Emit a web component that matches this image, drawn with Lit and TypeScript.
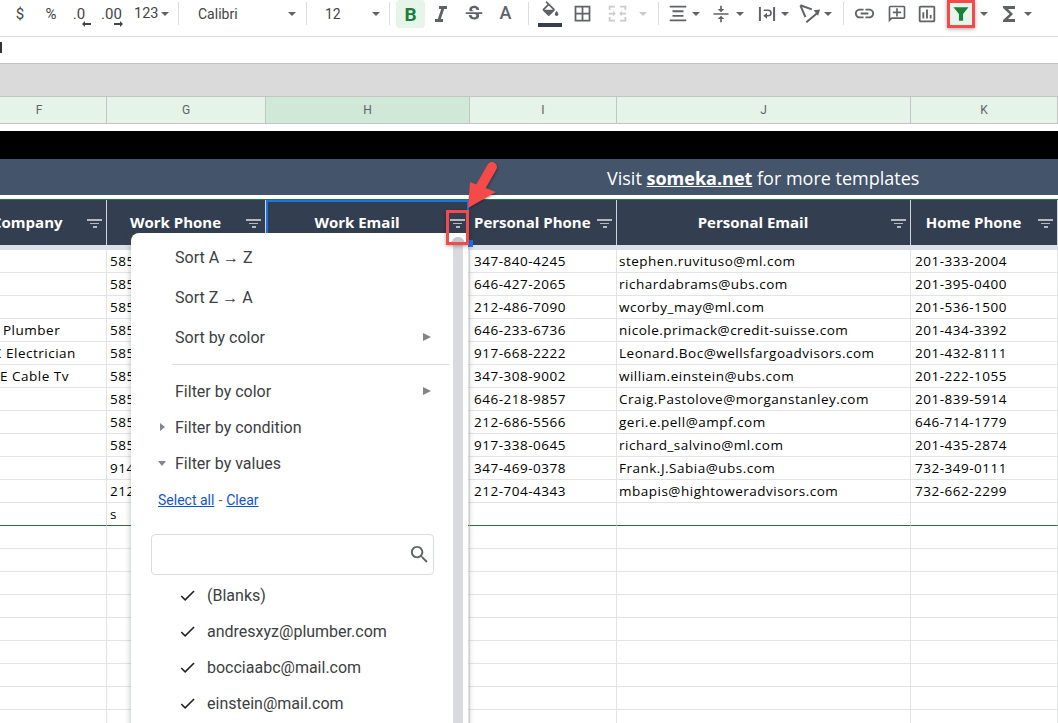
import { LitElement, html, css, svg } from "lit";
import { customElement } from "lit/decorators.js";

const icon = (d: any, size = 20, cls = "") =>
  html`<svg class=${cls} width=${size} height=${size} viewBox="0 0 24 24" fill="currentColor">${d}</svg>`;
const caret = html`<i class="caret"></i>`;
const sep = html`<i class="sep"></i>`;

const P = {
  italic: svg`<path d="M10 4v3h2.210l-3.420 10H6v3h8v-3h-2.210l3.420-10H18V4z"/>`,
  strike: svg`<path d="M6.850 7.080C6.850 4.370 9.450 3 12.240 3c1.640 0 3 .49 3.900 1.280.77.65 1.460 1.730 1.460 3.240h-3.010c0-.31-.05-.59-.15-.85-.29-.86-1.200-1.280-2.250-1.280-1.860 0-2.340 1.020-2.340 1.700 0 .48.25.88.74 1.210.38.25.77.48 1.410.7H7.390c-.21-.34-.54-.89-.54-1.920zM21 12v-2H3v2h9.620c1.150.45 1.960.75 1.960 1.970 0 1-.81 1.670-2.280 1.670-1.540 0-2.930-.54-2.930-2.510H6.400c0 .55.08 1.130.24 1.580.81 2.290 3.290 3.300 5.670 3.300 2.270 0 5.300-.89 5.300-4.050 0-.3-.01-1.160-.48-1.940H21z"/>`,
  fill: svg`<path d="M16.560 8.940L7.620 0 6.210 1.410l2.380 2.380-5.150 5.150c-.59.59-.59 1.540 0 2.120l5.500 5.500c.29.29.68.44 1.060.44s.77-.15 1.060-.44l5.500-5.500c.59-.58.59-1.530 0-2.120zM5.210 10L10 5.210 14.790 10H5.210zM19 11.500s-2 2.170-2 3.500c0 1.100.9 2 2 2s2-.9 2-2c0-1.330-2-3.500-2-3.500z"/>`,
  borders: svg`<path d="M3 3v18h18V3H3zm8 16H5v-6h6v6zm0-8H5V5h6v6zm8 8h-6v-6h6v6zm0-8h-6V5h6v6z"/>`,
  merge: svg`<path d="M2 3h7v2H4v3H2zM15 3h7v5h-2V5h-5zM2 16h2v3h5v2H2zM20 16h2v5h-7v-2h5zM2 11h5V9l3 3-3 3v-2H2zM22 11h-5V9l-3 3 3 3v-2h5z"/>`,
  align: svg`<path d="M3 3h18v2H3zM6 8h12v2H6zM6 13h12v2H6zM3 18h18v2H3z"/>`,
  valign: svg`<path d="M3 11h18v2H3zM11 2h2v4h3l-4 4-4-4h3zM12 14l4 4h-3v4h-2v-4H8z"/>`,
  wrap: svg`<path d="M3.500 3.500v17M20.500 3.500v17" stroke="currentColor" stroke-width="2.400" fill="none"/><path d="M8 7.500h5.500a3.300 3.300 0 0 1 0 6.600H11" stroke="currentColor" stroke-width="2" fill="none"/><path d="M12 10.500l-4.500 3.600 4.500 3.600z"/>`,
  rotate: svg`<path d="M1.500 2.500l12.500 4.500M1.500 2.500l5.500 13" stroke="currentColor" stroke-width="2.200" fill="none"/><path d="M8 21L20 11" stroke="currentColor" stroke-width="2.200" fill="none"/><path d="M23 7l-7 .8 4.800 6z"/>`,
  link: svg`<path d="M3.900 12c0-1.710 1.390-3.100 3.100-3.100h4V7H7c-2.760 0-5 2.240-5 5s2.240 5 5 5h4v-1.900H7c-1.710 0-3.100-1.390-3.100-3.100zM8 13h8v-2H8v2zm9-6h-4v1.900h4c1.710 0 3.100 1.390 3.100 3.100s-1.390 3.100-3.100 3.100h-4V17h4c2.760 0 5-2.240 5-5s-2.240-5-5-5z"/>`,
  comment: svg`<path d="M20 2H4c-1.100 0-2 .9-2 2v18l4-4h14c1.100 0 2-.9 2-2V4c0-1.100-.9-2-2-2zm0 14H5.170L4 17.170V4h16v12zM11 5h2v4h4v2h-4v4h-2v-4H7V9h4z"/>`,
  chart: svg`<path d="M9 17H7v-7h2v7zm4 0h-2V7h2v10zm4 0h-2v-4h2v4zm2 2H5V5h14v14zm0-16H5c-1.100 0-2 .9-2 2v14c0 1.100.9 2 2 2h14c1.100 0 2-.9 2-2V5c0-1.100-.9-2-2-2z"/>`,
  funnel: svg`<path d="M3 4h18l-6.500 8v8h-5v-8z"/>`,
  sigma: svg`<path d="M18 4H6v2l6.500 6L6 18v2h12v-3h-7l5-5-5-5h7z"/>`,
  search: svg`<path d="M15.500 14h-.79l-.28-.27C15.410 12.590 16 11.110 16 9.500 16 5.910 13.090 3 9.500 3S3 5.910 3 9.500 5.910 16 9.500 16c1.610 0 3.090-.59 4.230-1.570l.27.28v.79l5 4.990L20.490 19l-4.990-5zm-6 0C7.010 14 5 11.990 5 9.500S7.010 5 9.500 5 14 7.010 14 9.500 11.990 14 9.500 14z"/>`,
  check: svg`<path d="M9 16.170L4.830 12l-1.420 1.410L9 19 21 7l-1.410-1.410z"/>`,
};

// toolbar runs left to right, w = slot width, ml = gap before it
const tools: { w: number; ml?: number; cls?: string; c: any }[] = [
  { w: 30, c: html`<span class="sym">$</span>` },
  { w: 32, c: html`<span class="sym">%</span>` },
  { w: 24, c: html`<span class="dec">.0<i class="back"></i></span>` },
  { w: 41, c: html`<span class="dec">.00<i class="fwd"></i></span>` },
  { w: 38, cls: "num", c: html`<span>123</span>${caret}` },
  { w: 17, c: sep },
  { w: 111, cls: "drop", c: html`<span>Calibri</span>${caret}` },
  { w: 17, c: sep },
  { w: 67, cls: "drop size", c: html`<span>12</span>${caret}` },
  { w: 14, c: sep },
  { w: 29, cls: "bold", c: html`<b>B</b>` },
  { w: 32, c: icon(P.italic, 24) },
  { w: 33, c: icon(P.strike, 22) },
  { w: 31, cls: "color-a", c: html`<span>A</span>` },
  { w: 14, c: sep },
  { w: 30, cls: "fill", c: html`${icon(P.fill, 21)}<i class="swatch"></i>` },
  { w: 35, c: icon(P.borders, 21) },
  { w: 35, cls: "off", c: icon(P.merge, 21) },
  { w: 16, cls: "off", c: caret },
  { w: 15, c: sep },
  { w: 24, c: icon(P.align, 22) },
  { w: 12, c: caret },
  { w: 24, ml: 7, c: icon(P.valign, 20) },
  { w: 13, c: caret },
  { w: 24, ml: 9, c: icon(P.wrap, 20) },
  { w: 12, c: caret },
  { w: 24, ml: 7, c: icon(P.rotate, 22) },
  { w: 12, c: caret },
  { w: 18, c: sep },
  { w: 24, c: icon(P.link, 23) },
  { w: 25, ml: 8, c: icon(P.comment) },
  { w: 24, ml: 6, c: icon(P.chart, 22) },
  { w: 28, ml: 8, cls: "funnel", c: icon(P.funnel, 20) },
  { w: 12, ml: 3, c: caret },
  { w: 24, ml: 7, c: icon(P.sigma, 24) },
  { w: 12, ml: 1, c: caret },
];

const letters = ["F", "G", "H", "I", "J", "K"];
const heads = ["Company", "Work Phone", "Work Email", "Personal Phone", "Personal Email", "Home Phone"];

// [company, left offset, work phone, personal phone, personal email, home phone]
const rows: [string, number, string, string, string, string][] = [
  ["", 0, "585", "347-840-4245", "stephen.ruvituso@ml.com", "201-333-2004"],
  ["", 0, "585", "646-427-2065", "richardabrams@ubs.com", "201-395-0400"],
  ["", 0, "585", "212-486-7090", "wcorby_may@ml.com", "201-536-1500"],
  ["Plumber", 3, "585", "646-233-6736", "nicole.primack@credit-suisse.com", "201-434-3392"],
  ["C Electrician", -7, "585", "917-668-2222", "Leonard.Boc@wellsfargoadvisors.com", "201-432-8111"],
  ["E Cable Tv", 0, "585", "347-308-9002", "william.einstein@ubs.com", "201-222-1055"],
  ["", 0, "585", "646-218-9857", "Craig.Pastolove@morganstanley.com", "201-839-5914"],
  ["", 0, "585", "212-686-5566", "geri.e.pell@ampf.com", "646-714-1779"],
  ["", 0, "585", "917-338-0645", "richard_salvino@ml.com", "201-435-2874"],
  ["", 0, "914", "347-469-0378", "Frank.J.Sabia@ubs.com", "732-349-0111"],
  ["", 0, "212", "212-704-4343", "mbapis@hightoweradvisors.com", "732-662-2299"],
  ["", 0, "s", "", "", ""],
];

@customElement("app-root")
export class AppRoot extends LitElement {
  static styles = css`
    :host {
      display: block;
      position: relative;
      width: 1058px;
      height: 723px;
      overflow: hidden;
      background: #fff;
      font-family: Roboto, sans-serif;
      --cols: 107px 159px 204px 147px 294px 147px 1px;
    }
    .toolbar {
      display: flex;
      height: 36px;
      padding-left: 5px;
      border-bottom: 1px solid #dcdcdc;
      color: #5f6368;
    }
    .tool {
      flex: none;
      height: 27px;
      display: flex;
      align-items: center;
      justify-content: center;
      position: relative;
    }
    .caret {
      display: block;
      width: 0;
      height: 0;
      border-left: 4px solid transparent;
      border-right: 4px solid transparent;
      border-top: 4px solid #5f6368;
    }
    .sep {
      display: block;
      width: 1px;
      height: 23px;
      background: #dadce0;
    }
    .sym { font-size: 15px; color: #444; }
    .dec {
      font-size: 15px;
      color: #444;
      position: relative;
    }
    .back, .fwd {
      position: absolute;
      top: 18px;
      width: 7px;
      height: 2px;
      background: #444;
    }
    .back { right: -6px; }
    .fwd { right: 1px; }
    .back::before, .fwd::before {
      content: "";
      position: absolute;
      top: -2px;
      border-top: 3px solid transparent;
      border-bottom: 3px solid transparent;
    }
    .back::before { left: -2px; border-right: 3px solid #444; }
    .fwd::before { right: -2px; border-left: 3px solid #444; }
    .num { justify-content: flex-start; padding-left: 2px; gap: 3px; font-size: 14.5px; color: #444; box-sizing: border-box; }
    .drop { justify-content: space-between; padding: 0 2px 0 11px; font-size: 14px; color: #444; box-sizing: border-box; }
    .size { padding-left: 10px; }
    .bold {
      height: 28px;
      background: #e6f4ea;
      border-radius: 4px;
      color: #188038;
      font-size: 19px;
    }
    .color-a { font-size: 18px; color: #5f6368; font-weight: 500; padding-bottom: 3px; box-sizing: border-box; }
    .fill { color: #5f6368; padding-bottom: 4px; box-sizing: border-box; }
    .swatch {
      position: absolute;
      left: 3px;
      top: 23px;
      width: 24px;
      height: 4px;
      background: #333f50;
    }
    .off { color: #c8cacc; }
    .off .caret { border-top-color: #c8cacc; }
    .funnel { color: #188038; background: #e6f4ea; height: 28px; }

    .formula {
      height: 26px;
      border-bottom: 1px solid #c4c4c4;
      position: relative;
    }
    .cursor {
      display: block;
      width: 1.5px;
      height: 11px;
      background: #333;
      position: relative;
      top: 5px;
    }
    .gray { height: 32px; background: #dadada; }
    .letters {
      display: grid;
      grid-template-columns: var(--cols);
      height: 28px;
      box-sizing: border-box;
      border-top: 1px solid #c4c4c4;
      border-bottom: 1px solid #c4c4c4;
      background: #e6f3e9;
      font-size: 12px;
      color: #5f6368;
    }
    .letters div {
      display: flex;
      align-items: center;
      justify-content: center;
      border-right: 1px solid #c4c4c4;
    }
    .letters .first { padding-right: 28px; }
    .letters .on { background: #cfe8d8; }
    .thin { height: 7px; }
    .black { height: 28px; background: #000; }
    .banner {
      height: 36px;
      box-sizing: border-box;
      padding: 0 0 0 607px;
      background: #44546a;
      color: #fff;
      font: 18px/38px "Open Sans", sans-serif;
      white-space: nowrap;
    }
    .banner b { text-decoration: underline; }
    .gap { height: 4px; }
    .heads {
      display: grid;
      grid-template-columns: var(--cols);
      height: 46px;
      box-sizing: border-box;
      border-top: 1px solid #1f7a3c;
      background: #333f50;
      color: #fff;
      font: 700 15px "Open Sans", sans-serif;
    }
    .head {
      display: flex;
      align-items: center;
      padding: 0 4px 1px 4px;
      border-right: 1px solid #d0d3d8;
      position: relative;
      min-width: 0;
    }
    .head span { flex: 1; text-align: center; white-space: nowrap; min-width: 0; margin-right: 6px; }
    .head.first { overflow: hidden; }
    .head.first span { flex: none; margin-left: -12px; }
    .head.first .ficon { margin-left: auto; }
    .head.left span { text-align: left; }
    .ficon { flex: none; width: 15px; height: 9px; margin-top: 3px; display: grid; justify-items: center; row-gap: 2px; align-content: start; }
    .ficon i { display: block; height: 1.5px; background: #b5b9c0; }
    .ficon i:nth-child(1) { width: 15px; }
    .ficon i:nth-child(2) { width: 9px; }
    .ficon i:nth-child(3) { width: 4px; }
    .head.sel {
      box-shadow: inset 2px 0 #1a73e8, inset -2px 0 #1a73e8, inset 0 2px #1a73e8;
      border-right-color: transparent;
    }
    .band { height: 5px; background: #dde0e6; }
    .grid {
      display: grid;
      grid-template-columns: var(--cols);
      grid-auto-rows: 23px;
      font: 13.5px "Open Sans", sans-serif;
      letter-spacing: 0.5px;
      color: #000;
    }
    .cell {
      box-sizing: border-box;
      border-right: 1px solid #e2e3e3;
      border-bottom: 1px solid #e2e3e3;
      padding: 0 0 0 3px;
      line-height: 22px;
      white-space: nowrap;
      overflow: hidden;
    }
    .cell.wide { padding-left: 4px; }
    .cell.tight { padding-left: 2px; }
    .cell.last { border-bottom-color: #2e6b43; }

    .menu {
      position: absolute;
      left: 131px;
      top: 233px;
      width: 337px;
      height: 520px;
      display: flex;
      background: #fff;
      border-radius: 8px 0 0 0;
      box-shadow: 0 2px 6px rgba(60, 64, 67, 0.35);
      color: #3c4043;
      font-size: 16px;
    }
    .mbody { width: 322px; padding-top: 4px; flex: none; }
    .track {
      flex: none;
      width: 10px;
      margin-top: 4px;
      background: #d9dadf;
      border-radius: 5px 5px 0 0;
    }
    .mi {
      height: 40px;
      display: flex;
      align-items: center;
      justify-content: space-between;
      padding: 0 22px 0 44px;
    }
    .to { font-family: "Liberation Sans", sans-serif; }
    .tri {
      width: 0;
      height: 0;
      border-top: 4px solid transparent;
      border-bottom: 4px solid transparent;
      border-left: 8px solid #80868b;
    }
    .divider { height: 1px; margin: 7px 4px 8px 41px; background: #dadce0; }
    .fi {
      height: 36px;
      display: flex;
      align-items: center;
      padding-left: 27px;
    }
    .fi.plain { padding-left: 44px; justify-content: space-between; padding-right: 22px; }
    .slot { width: 17px; flex: none; }
    .tr-r {
      display: block;
      width: 0;
      margin-left: 2px;
      border-top: 4px solid transparent;
      border-bottom: 4px solid transparent;
      border-left: 5px solid #80868b;
    }
    .tr-d {
      display: block;
      width: 0;
      border-left: 4px solid transparent;
      border-right: 4px solid transparent;
      border-top: 5px solid #80868b;
    }
    .links {
      height: 38px;
      display: flex;
      align-items: center;
      padding-left: 27px;
      font-size: 14px;
      gap: 4px;
      color: #5f6368;
    }
    .links a { color: #1155cc; text-decoration: underline; }
    .search {
      width: 283px;
      height: 41px;
      margin: 15px 0 2px 20px;
      box-sizing: border-box;
      border: 1px solid #dadce0;
      border-radius: 4px;
      display: flex;
      align-items: center;
      justify-content: flex-end;
      padding-right: 2px;
      color: #5f6368;
    }
    .val {
      height: 36px;
      display: flex;
      align-items: center;
      gap: 10px;
      padding-left: 47px;
    }
    .val svg { color: #202124; }

    .mark {
      position: absolute;
      box-sizing: border-box;
      border: 3px solid #f44a4a;
      box-shadow: 0 1px 4px rgba(0, 0, 0, 0.35);
    }
    .mark.top { left: 947px; top: 0; width: 28px; height: 28px; }
    .mark.hd { left: 446px; top: 210px; width: 23px; height: 35px; }
    .handle {
      position: absolute;
      left: 468px;
      top: 240px;
      width: 5px;
      height: 7px;
      background: #1a73e8;
    }
    .thumb {
      position: absolute;
      left: 451px;
      top: 237px;
      width: 14px;
      height: 8px;
      border-radius: 7px 7px 0 0;
      background: #c6c7cb;
    }
    .arrow { position: absolute; left: 460px; top: 158px; filter: drop-shadow(1px 1px 1px rgba(0,0,0,.3)); }
  `;

  render() {
    return html`
      <div class="toolbar">
        ${tools.map(
          (t) => html`<div
            class="tool ${t.cls ?? ""}"
            style="width:${t.w}px;margin-left:${t.ml ?? 0}px"
          >${t.c}</div>`
        )}
      </div>
      <div class="formula"><i class="cursor"></i></div>
      <div class="gray"></div>
      <div class="letters">
        ${letters.map(
          (l) => html`<div class="${l === "H" ? "on" : ""} ${l === "F" ? "first" : ""}">${l}</div>`
        )}
      </div>
      <div class="thin"></div>
      <div class="black"></div>
      <div class="banner">Visit <b>someka.net</b> for more templates</div>
      <div class="gap"></div>
      <div class="heads">
        ${heads.map(
          (h, i) => html`<div
            class="head ${i === 0 ? "first" : ""} ${i === 2 ? "sel" : ""} ${i === 3 ? "left" : ""}"
          >
            <span>${h}</span>
            <div class="ficon"><i></i><i></i><i></i></div>
          </div>`
        )}
      </div>
      <div class="band"></div>
      <div class="grid">
        ${rows.map((r, i) => {
          const last = i === rows.length - 1 ? "last" : "";
          return html`
            <div class="cell ${last}"><div style="margin-left:${r[1] - 3}px">${r[0]}</div></div>
            <div class="cell ${last}">${r[2]}</div>
            <div class="cell ${last}"></div>
            <div class="cell wide ${last}">${r[3]}</div>
            <div class="cell tight ${last}">${r[4]}</div>
            <div class="cell wide ${last}">${r[5]}</div>
            <div></div>
          `;
        })}
        ${Array.from({ length: 9 }).map(
          () => html`${letters.map(() => html`<div class="cell"></div>`)}<div></div>`
        )}
      </div>

      <div class="menu">
        <div class="mbody">
          <div class="mi"><span>Sort A <span class="to">→</span> Z</span></div>
          <div class="mi"><span>Sort Z <span class="to">→</span> A</span></div>
          <div class="mi">Sort by color<i class="tri"></i></div>
          <div class="divider"></div>
          <div class="fi plain">Filter by color<i class="tri"></i></div>
          <div class="fi"><span class="slot"><i class="tr-r"></i></span>Filter by condition</div>
          <div class="fi"><span class="slot"><i class="tr-d"></i></span>Filter by values</div>
          <div class="links"><a>Select all</a> - <a>Clear</a></div>
          <div class="search">${icon(P.search, 23)}</div>
          ${["(Blanks)", "andresxyz@plumber.com", "bocciaabc@mail.com", "einstein@mail.com"].map(
            (v) => html`<div class="val">${icon(P.check, 19)}<span>${v}</span></div>`
          )}
        </div>
        <div class="track"></div>
      </div>

      <div class="thumb"></div>
      <div class="handle"></div>
      <div class="mark top"></div>
      <div class="mark hd"></div>
      <svg class="arrow" width="40" height="54" viewBox="0 0 40 54">
        <path d="M8 50 L10 24 L36 34 Z" fill="#f44a4a" />
        <path d="M32 9 L20 30" stroke="#f44a4a" stroke-width="10" stroke-linecap="round" />
      </svg>
    `;
  }
}
